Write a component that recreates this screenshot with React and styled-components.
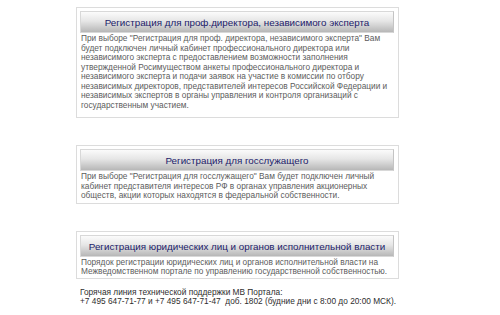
import React from "react";
import styled, { createGlobalStyle } from "styled-components";

const GlobalStyle = createGlobalStyle`
  html, body {
    margin: 0;
    padding: 0;
    background: #ffffff;
  }
  body {
    font-family: "Liberation Sans", Arial, sans-serif;
  }
`;

const sections = [
  {
    title: "Регистрация для проф.директора, независимого эксперта",
    text:
      "При выборе \"Регистрация для проф. директора, независимого эксперта\" Вам будет подключен личный кабинет профессионального директора или независимого эксперта с предоставлением возможности заполнения утвержденной Росимуществом анкеты профессионального директора и независимого эксперта и подачи заявок на участие в комиссии по отбору независимых директоров, представителей интересов Российской Федерации и независимых экспертов в органы управления и контроля организаций с государственным участием.",
    tail: 7,
  },
  {
    title: "Регистрация для госслужащего",
    text:
      "При выборе \"Регистрация для госслужащего\" Вам будет подключен личный кабинет представителя интересов РФ в органах управления акционерных обществ, акции которых находятся в федеральной собственности.",
    tail: 2,
  },
  {
    title: "Регистрация юридических лиц и органов исполнительной власти",
    text:
      "Порядок регистрации юридических лиц и органов исполнительной власти на Межведомственном портале по управлению государственной собственностью.",
    tail: 1,
  },
];

export default function App() {
  return (
    <>
      <GlobalStyle />
      <Page>
        {sections.map((s, i) => (
          <Card key={i} $tail={s.tail}>
            <Header>{s.title}</Header>
            <Description>{s.text}</Description>
          </Card>
        ))}
        <Hotline>
          Горячая линия технической поддержки МВ Портала:
          <br />
          +7 495 647-71-77 и +7 495 647-71-47&nbsp; доб. 1802 (будние дни с 8:00 до 20:00 МСК).
        </Hotline>
      </Page>
    </>
  );
}

const Page = styled.div`
  width: 323px;
  padding: 7px 0 0 76px;
  display: flex;
  flex-direction: column;
  gap: 27px;
`;

const Card = styled.div`
  border: 1px solid #dcdcdc;
  background: #fff;
  padding: 3px 4px ${(p) => p.$tail}px 3px;
`;

const Header = styled.div`
  height: 22px;
  line-height: 21px;
  text-align: center;
  font-size: 9.8px;
  color: #1b1b6a;
  border: 1px solid #d8d8d8;
  border-right-color: #c4c4c4;
  background: linear-gradient(to bottom, #fbfbfb 0%, #e6e6e6 45%, #b7b7b7 100%);
  box-sizing: border-box;
  white-space: nowrap;
`;

const Description = styled.div`
  font-size: 8.3px;
  line-height: 9.5px;
  color: #5c5c5c;
  padding: 1px 0 0 1px;
`;

const Hotline = styled.div`
  margin-top: -18px;
  padding-left: 4px;
  font-size: 8.3px;
  line-height: 9px;
  color: #2e2e2e;
  white-space: nowrap;
`;
